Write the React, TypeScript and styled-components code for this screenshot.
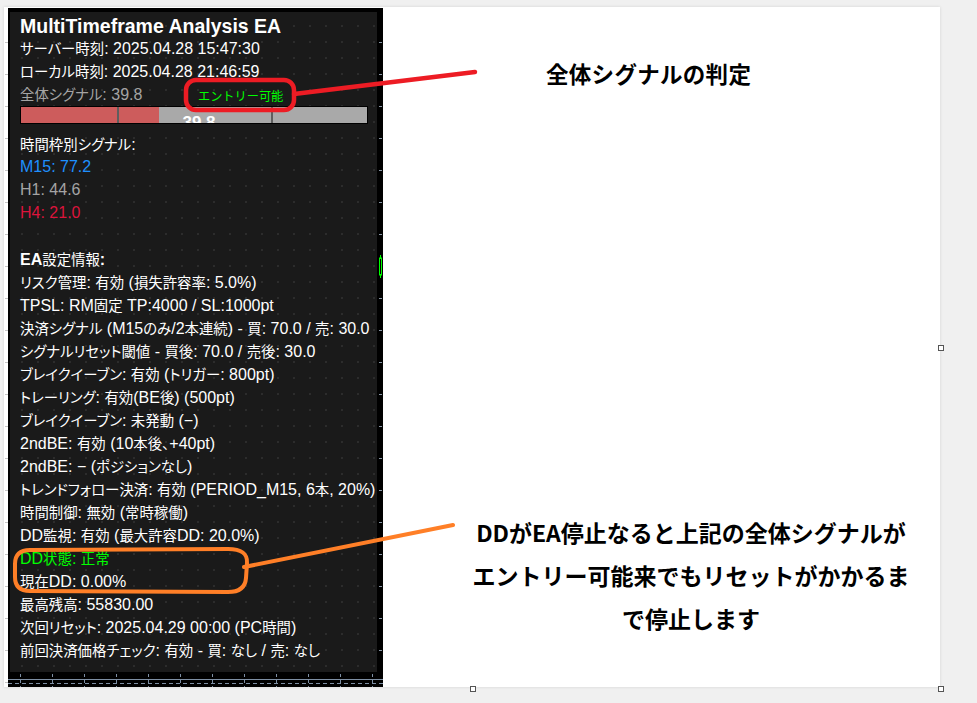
import React from 'react';
import styled, { createGlobalStyle } from 'styled-components';

const GlobalStyle = createGlobalStyle`
  html, body { margin: 0; padding: 0; background: #f0f0f0; }
  body {
    width: 977px; height: 703px; overflow: hidden;
    font-family: "Liberation Sans", "Noto Sans CJK JP", sans-serif;
  }
`;

const Page = styled.div`
  padding: 7px 0 0 4px;
`;

const Canvas = styled.div`
  position: relative;
  width: 936px;
  height: 680px;
  background: #ffffff;
  display: flex;
  box-shadow: 0 0 3px rgba(0, 0, 0, 0.12);
`;

const LeftTicks = styled.svg`
  display: block;
  width: 4px;
  height: 680px;
  flex: none;
`;

const Chart = styled.div`
  flex: none;
  margin-top: 1px;
  width: 375px;
  height: 679px;
  background: #000;
  display: grid;
  grid-template-columns: 2px 367px 6px;
  grid-template-rows: 4px 660px 15px;
  grid-template-areas:
    ". . ."
    ". panel raxis"
    "baxis baxis baxis";
`;

const Panel = styled.div`
  grid-area: panel;
  background-color: #1a1a1a;
  background-image: radial-gradient(circle, #2c2c2c 0.7px, transparent 1.1px);
  background-size: 16px 16px;
  background-position: 4px 6px;
  padding: 5px 0 0 10px;
  box-sizing: border-box;
  overflow: hidden;
`;

const RightAxis = styled.svg`
  grid-area: raxis;
  display: block;
  width: 6px;
  height: 660px;
`;

const BottomAxis = styled.svg`
  grid-area: baxis;
  display: block;
  width: 375px;
  height: 15px;
`;

const Title = styled.div`
  font-size: 19.5px;
  font-weight: bold;
  line-height: 19px;
  color: #ffffff;
  white-space: nowrap;
`;

type Tone = 'white' | 'gray' | 'blue' | 'red' | 'green';
const toneColor: Record<Tone, string> = {
  white: '#ffffff',
  gray: '#a4a4a4',
  blue: '#1e90ff',
  red: '#dc143c',
  green: '#00ff00',
};

const Line = styled.div<{ $tone?: Tone }>`
  font-size: 16px;
  line-height: 23px;
  height: 23px;
  color: ${(p) => toneColor[p.$tone ?? 'white']};
  white-space: nowrap;
`;

const Jp = styled.span`
  font-family: "Noto Sans CJK JP", sans-serif;
  font-size: 0.9em;
  font-feature-settings: "palt" 1;
`;

const Strong = styled.span`
  font-weight: bold;
`;

const SignalRow = styled.div`
  display: grid;
  grid-template-columns: 178px auto;
  align-items: start;
  height: 23px;
`;

const EntryTag = styled.span`
  font-family: "Noto Sans CJK JP", sans-serif;
  font-size: 12.2px;
  line-height: 18px;
  padding-top: 5px;
  color: #00ff00;
  white-space: nowrap;
`;

const Bar = styled.div`
  position: relative;
  box-sizing: border-box;
  width: 348px;
  height: 18px;
  margin: 1px 0 8px;
  border: 1px solid #000;
  background: #a9a9a9;
  overflow: hidden;
`;

const BarFill = styled.div`
  height: 100%;
  background: #cd5c5c;
`;

const BarTick = styled.div<{ $at: number }>`
  position: absolute;
  top: 0;
  bottom: 0;
  left: ${(p) => p.$at}%;
  width: 2px;
  background: #5e5e5e;
`;

const BarLabel = styled.div`
  position: absolute;
  left: 0;
  right: 0;
  top: 7px;
  padding-left: 10px;
  text-align: center;
  font-size: 17px;
  font-weight: bold;
  line-height: 18px;
  color: #ffffff;
`;

const Spacer = styled.div`
  height: 23px;
`;

const Notes = styled.div`
  flex: 1;
  display: flex;
  flex-direction: column;
  align-items: flex-start;
  padding-top: 51px;
  font-family: "Noto Sans CJK JP", "Liberation Sans", sans-serif;
  font-weight: bold;
  color: #000;
`;

const NoteTitle = styled.div`
  margin-left: 163px;
  font-size: 22.5px;
  line-height: 30px;
  white-space: nowrap;
  letter-spacing: 0.3px;
`;

const NoteBody = styled.div`
  margin-top: 423px;
  margin-left: 82px;
  width: 452px;
  text-align: center;
  font-size: 23px;
  line-height: 43px;
  white-space: nowrap;
`;

const Overlay = styled.svg`
  position: absolute;
  left: 0;
  top: 0;
  width: 936px;
  height: 680px;
  pointer-events: none;
  overflow: visible;
`;

const Handle = styled.div<{ $x: number; $y: number }>`
  position: absolute;
  left: ${(p) => p.$x}px;
  top: ${(p) => p.$y}px;
  width: 4px;
  height: 4px;
  border: 1px solid #555;
  background: #fff;
`;

const CJK = /([\u3000-\u30ff\u3400-\u9fff\uff00-\uffef]+)/;

function Mixed({ text }: { text: string }) {
  const parts = text.split(CJK);
  return (
    <>
      {parts.map((p, i) =>
        p === '' ? null : i % 2 === 1 ? <Jp key={i}>{p}</Jp> : <React.Fragment key={i}>{p}</React.Fragment>
      )}
    </>
  );
}

type Row = { text: string; tone?: Tone };

const settings: Row[] = [
  { text: 'リスク管理: 有効 (損失許容率: 5.0%)' },
  { text: 'TPSL: RM固定 TP:4000 / SL:1000pt' },
  { text: '決済シグナル (M15のみ/2本連続) - 買: 70.0 / 売: 30.0' },
  { text: 'シグナルリセット閾値 - 買後: 70.0 / 売後: 30.0' },
  { text: 'ブレイクイーブン: 有効 (トリガー: 800pt)' },
  { text: 'トレーリング: 有効(BE後) (500pt)' },
  { text: 'ブレイクイーブン: 未発動 (−)' },
  { text: '2ndBE: 有効 (10本後、+40pt)' },
  { text: '2ndBE: − (ポジションなし)' },
  { text: 'トレンドフォロー決済: 有効 (PERIOD_M15, 6本, 20%)' },
  { text: '時間制御: 無効 (常時稼働)' },
  { text: 'DD監視: 有効 (最大許容DD: 20.0%)' },
  { text: 'DD状態: 正常', tone: 'green' },
  { text: '現在DD: 0.00%' },
  { text: '最高残高: 55830.00' },
  { text: '次回リセット: 2025.04.29 00:00 (PC時間)' },
  { text: '前回決済価格チェック: 有効 - 買: なし / 売: なし' },
];

const signal = 39.8;

export default function App() {
  const rightTicks = Array.from({ length: 21 }, (_, i) => 30 + i * 32);
  const leftTicks = Array.from({ length: 21 }, (_, i) => 35 + i * 32);
  const bottomTicks = Array.from({ length: 12 }, (_, i) => 12 + i * 32);

  return (
    <>
      <GlobalStyle />
      <Page>
        <Canvas>
          <LeftTicks viewBox="0 0 4 680">
            {leftTicks.map((y) => (
              <rect key={y} x={1} y={y} width={3} height={1} fill="#c4c4c4" />
            ))}
          </LeftTicks>
          <Chart>
            <Panel>
              <Title>MultiTimeframe Analysis EA</Title>
              <Line><Mixed text="サーバー時刻: 2025.04.28 15:47:30" /></Line>
              <Line><Mixed text="ローカル時刻: 2025.04.28 21:46:59" /></Line>
              <SignalRow>
                <Line $tone="gray"><Mixed text="全体シグナル: 39.8" /></Line>
                <EntryTag>エントリー可能</EntryTag>
              </SignalRow>
              <Bar>
                <BarFill style={{ width: `${signal}%` }} />
                <BarTick $at={27.7} />
                <BarTick $at={72.2} />
                <BarLabel>39.8</BarLabel>
              </Bar>
              <Line><Mixed text="時間枠別シグナル:" /></Line>
              <Line $tone="blue">M15: 77.2</Line>
              <Line $tone="gray">H1: 44.6</Line>
              <Line $tone="red">H4: 21.0</Line>
              <Spacer />
              <Line>
                <Strong>EA</Strong><Jp>設定情報</Jp><Strong>:</Strong>
              </Line>
              {settings.map((r, i) => (
                <Line key={i} $tone={r.tone}>
                  <Mixed text={r.text} />
                </Line>
              ))}
            </Panel>
            <RightAxis viewBox="0 0 6 660">
              {rightTicks.map((y) => (
                <rect key={y} x={2} y={y} width={3} height={1} fill="#8a97a6" />
              ))}
              <line x1={3.5} y1={243} x2={3.5} y2={266} stroke="#00ff00" strokeWidth={1} />
              <rect x={2.5} y={246} width={2} height={17} fill="#000" stroke="#00ff00" strokeWidth={1} />
            </RightAxis>
            <BottomAxis viewBox="0 0 375 15">
              <line x1={0} y1={7.5} x2={375} y2={7.5} stroke="#7d8ea3" strokeWidth={1} />
              <line x1={0} y1={11.5} x2={375} y2={11.5} stroke="#7d8ea3" strokeWidth={1} strokeDasharray="4 3" />
              {bottomTicks.map((x) => (
                <line key={x} x1={x + 0.5} y1={2} x2={x + 0.5} y2={15} stroke="#7d8ea3" strokeWidth={1} strokeDasharray="3 3" />
              ))}
            </BottomAxis>
          </Chart>
          <Notes>
            <NoteTitle>全体シグナルの判定</NoteTitle>
            <NoteBody>
              DDがEA停止なると上記の全体シグナルが
              <br />
              エントリー可能来でもリセットがかかるま
              <br />
              で停止します
            </NoteBody>
          </Notes>
          <Overlay viewBox="0 0 936 680">
            <g transform="translate(-4,-7)">
              <rect x={186} y={80} width={108} height={30} rx={10} fill="none" stroke="#ed1c24" strokeWidth={4.5} />
              <line x1={294} y1={94} x2={475} y2={72} stroke="#ed1c24" strokeWidth={4.5} strokeLinecap="round" />
              <path
                d="M30 550 L228 549 Q248 549 247 563 L246 578 Q245 592 228 592 L30 591 Q15 591 15 577 L15 564 Q15 550 30 550 Z"
                fill="none"
                stroke="#ff7f27"
                strokeWidth={4}
              />
              <line x1={244} y1={567} x2={453} y2={525} stroke="#ff7f27" strokeWidth={4} strokeLinecap="round" />
            </g>
          </Overlay>
          <Handle $x={934} $y={338} />
          <Handle $x={466} $y={679} />
          <Handle $x={934} $y={679} />
        </Canvas>
      </Page>
    </>
  );
}
